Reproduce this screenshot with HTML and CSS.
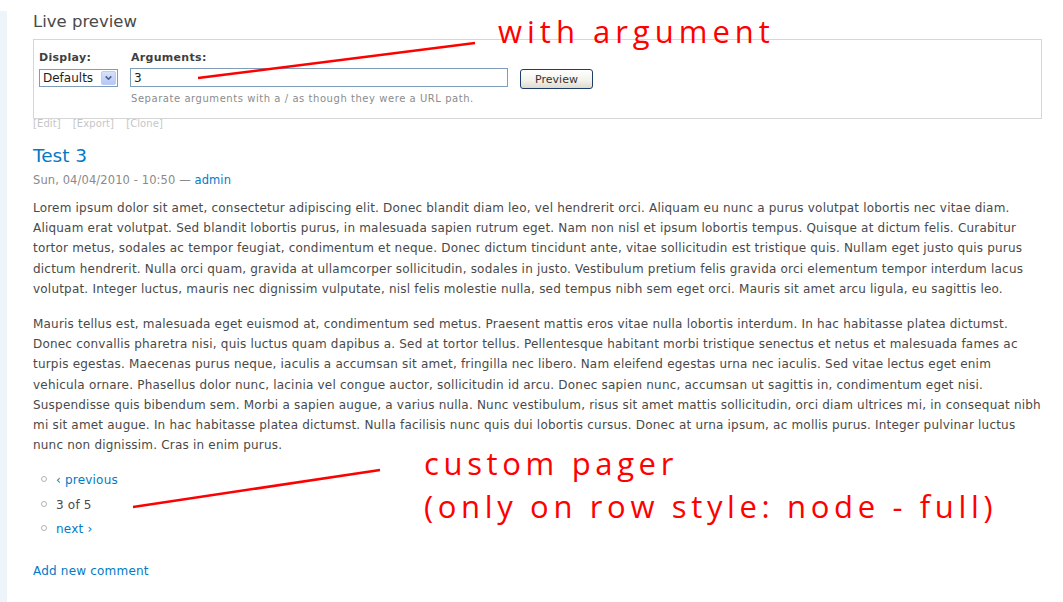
FILE: index.html
```html
<!DOCTYPE html>
<html>
<head>
<meta charset="utf-8">
<title>Live preview</title>
<link rel="stylesheet" href="styles.css">
</head>
<body>
<div class="page">
  <h2 class="section-title">Live preview</h2>
  <fieldset class="preview-form">
    <div class="form-grid">
      <label class="form-label">Display:</label>
      <label class="form-label">Arguments:</label>
      <span></span>
      <div class="select">
        <span class="select-value">Defaults</span>
        <span class="select-arrow">
          <svg width="15" height="15" viewBox="0 0 15 15"><path d="M4 5.5 L7.5 9 L11 5.5" fill="none" stroke="#4d6185" stroke-width="2"/></svg>
        </span>
      </div>
      <input class="text-input" type="text" value="3">
      <button class="btn" type="button">Preview</button>
      <span></span>
      <div class="description">Separate arguments with a / as though they were a URL path.</div>
    </div>
  </fieldset>
  <div class="admin-links"><span>[Edit]</span><span>[Export]</span><span>[Clone]</span></div>

  <h2 class="node-title"><a href="#">Test 3</a></h2>
  <div class="submitted">Sun, 04/04/2010 - 10:50 — <a href="#">admin</a></div>

  <div class="content">
    <p>Lorem ipsum dolor sit amet, consectetur adipiscing elit. Donec blandit diam leo, vel hendrerit orci. Aliquam eu nunc a purus volutpat lobortis nec vitae diam. Aliquam erat volutpat. Sed blandit lobortis purus, in malesuada sapien rutrum eget. Nam non nisl et ipsum lobortis tempus. Quisque at dictum felis. Curabitur tortor metus, sodales ac tempor feugiat, condimentum et neque. Donec dictum tincidunt ante, vitae sollicitudin est tristique quis. Nullam eget justo quis purus dictum hendrerit. Nulla orci quam, gravida at ullamcorper sollicitudin, sodales in justo. Vestibulum pretium felis gravida orci elementum tempor interdum lacus volutpat. Integer luctus, mauris nec dignissim vulputate, nisl felis molestie nulla, sed tempus nibh sem eget orci. Mauris sit amet arcu ligula, eu sagittis leo.</p>
    <p>Mauris tellus est, malesuada eget euismod at, condimentum sed metus. Praesent mattis eros vitae nulla lobortis interdum. In hac habitasse platea dictumst. Donec convallis pharetra nisi, quis luctus quam dapibus a. Sed at tortor tellus. Pellentesque habitant morbi tristique senectus et netus et malesuada fames ac turpis egestas. Maecenas purus neque, iaculis a accumsan sit amet, fringilla nec libero. Nam eleifend egestas urna nec iaculis. Sed vitae lectus eget enim vehicula ornare. Phasellus dolor nunc, lacinia vel congue auctor, sollicitudin id arcu. Donec sapien nunc, accumsan ut sagittis in, condimentum eget nisi. Suspendisse quis bibendum sem. Morbi a sapien augue, a varius nulla. Nunc vestibulum, risus sit amet mattis sollicitudin, orci diam ultrices mi, in consequat nibh mi sit amet augue. In hac habitasse platea dictumst. Nulla facilisis nunc quis dui lobortis cursus. Donec at urna ipsum, ac mollis purus. Integer pulvinar luctus nunc non dignissim. Cras in enim purus.</p>
  </div>

  <ul class="pager">
    <li><a href="#">‹ previous</a></li>
    <li>3 of 5</li>
    <li><a href="#">next ›</a></li>
  </ul>

  <div class="links"><a href="#">Add new comment</a></div>
</div>

<div class="notes">
  <svg class="note-lines" width="1063" height="602" viewBox="0 0 1063 602">
    <line x1="198" y1="78" x2="475" y2="43" stroke="#ff0000" stroke-width="2.5"/>
    <line x1="133" y1="507" x2="380" y2="470" stroke="#ff0000" stroke-width="2.5"/>
  </svg>
  <div class="note note-argument">with argument</div>
  <div class="note note-pager">
    <span class="note-line">custom pager</span>
    <span class="note-line">(only on row style: node - full)</span>
  </div>
</div>
</body>
</html>
```
FILE: styles.css
```css
html, body {
  margin: 0;
  padding: 0;
  background: #ffffff;
}

body {
  position: relative;
  width: 1063px;
  height: 602px;
  overflow: hidden;
  font-family: "DejaVu Sans", Verdana, sans-serif;
  font-size: 12px;
  letter-spacing: 0.2px;
  color: #494949;
}

a {
  color: #027ac6;
  text-decoration: none;
}

.page {
  box-sizing: border-box;
  height: 599px;
  border-left: 7px solid #edf5fb;
  border-bottom: 1px solid #dfe9f3;
  padding: 0 21px 0 26px;
}

.section-title {
  margin: 11px 0 6px;
  font-size: 16.5px;
  line-height: 22px;
  font-weight: normal;
  letter-spacing: 0;
  color: #4a4a4a;
}

.preview-form {
  margin: 0;
  border: 1px solid #d6d6d6;
  padding: 10px 5px 13px;
}

.form-grid {
  display: grid;
  grid-template-columns: 79px 378px auto;
  column-gap: 12px;
  align-items: start;
}

.form-label {
  font-weight: bold;
  font-size: 11px;
  line-height: 16px;
  margin-bottom: 2px;
  color: #3f3f3f;
  letter-spacing: 0.3px;
}

.form-label:nth-child(2) {
  padding-left: 1px;
}

.select {
  box-sizing: border-box;
  margin-top: 1px;
  width: 79px;
  height: 18px;
  border: 1px solid #7f9db9;
  display: flex;
  align-items: center;
  justify-content: space-between;
  padding: 0 1px 0 3px;
  font-size: 12px;
  letter-spacing: 0;
  color: #222;
}

.select-arrow {
  display: flex;
  width: 15px;
  height: 14px;
  box-sizing: border-box;
  border: 1px solid #bccdf5;
  border-radius: 2px;
  background: linear-gradient(#d5e1fd, #b5c8f7);
  align-items: center;
  justify-content: center;
}

.select-arrow svg {
  width: 13px;
  height: 12px;
}

.text-input {
  box-sizing: border-box;
  width: 378px;
  height: 19px;
  margin: 0;
  border: 1px solid #7f9db9;
  padding: 0 3px;
  font-family: "DejaVu Sans", Verdana, sans-serif;
  font-size: 12px;
  color: #222;
  outline: none;
}

.btn {
  box-sizing: border-box;
  margin-top: 1px;
  width: 73px;
  height: 20px;
  border: 1px solid #1f3d6b;
  border-radius: 3px;
  background: linear-gradient(#ffffff, #f2f1ea 60%, #dedbcd);
  font-family: "DejaVu Sans", Tahoma, sans-serif;
  font-size: 11px;
  color: #333;
  padding: 0;
}

.description {
  margin-top: 4px;
  padding-left: 1px;
  font-size: 10px;
  line-height: 12px;
  color: #8c8c8c;
  letter-spacing: 0.55px;
}

.admin-links {
  display: flex;
  gap: 12px;
  font-size: 10px;
  line-height: 10px;
  letter-spacing: 0.1px;
  color: #c6c6c6;
}

.node-title {
  margin: 15px 0 5px;
  font-size: 18.5px;
  line-height: 24px;
  font-weight: normal;
  letter-spacing: 0;
}

.submitted {
  font-size: 11.5px;
  line-height: 14px;
  letter-spacing: 0.1px;
  color: #8a8a8a;
}

.content {
  margin-top: 11px;
}

.content p {
  margin: 0 0 15px;
  line-height: 20.2px;
}

.content p:last-child {
  margin-bottom: 0;
}

.pager {
  list-style: none;
  margin: 13px 0 0;
  padding: 0 0 0 23px;
  line-height: 24.5px;
}

.pager li {
  position: relative;
}

.pager li::before {
  content: "";
  position: absolute;
  left: -15px;
  top: 8px;
  width: 4px;
  height: 4px;
  border: 1px solid #b3b3b3;
  border-radius: 50%;
}

.links {
  margin-top: 19px;
  line-height: 20px;
}

.notes {
  position: absolute;
  left: 0;
  top: 0;
  width: 1063px;
  height: 602px;
  pointer-events: none;
}

.note-lines {
  position: absolute;
  left: 0;
  top: 0;
}

.note {
  position: absolute;
  font-family: "Open Sans", sans-serif;
  font-size: 31px;
  line-height: 43px;
  color: #ff0000;
  letter-spacing: 5px;
  white-space: nowrap;
}

.note-argument {
  left: 498px;
  top: 10px;
}

.note-pager {
  left: 424px;
  top: 454px;
  letter-spacing: 4.65px;
  line-height: 18px;
}

.note-line {
  display: block;
}

.note-line + .note-line {
  margin-top: 25px;
}
```
